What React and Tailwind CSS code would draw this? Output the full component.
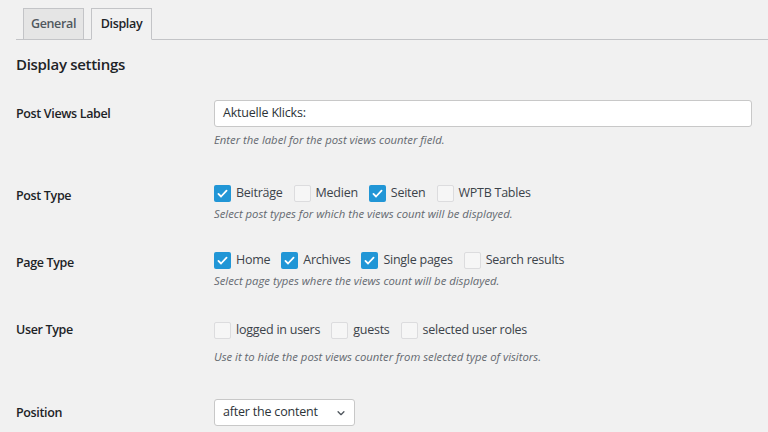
import React from 'react';

const Check = ({ checked, label }) => (
  <label className="flex items-center">
    {checked ? (
      <span className="flex h-[17px] w-[17px] items-center justify-center rounded-[2px] bg-[#2196d6]">
        <svg viewBox="0 0 16 16" className="h-[13px] w-[13px]" fill="none" stroke="#fff" strokeWidth="2.2" strokeLinecap="round" strokeLinejoin="round">
          <path d="M3 8.5l3.2 3.2L13 4.5" />
        </svg>
      </span>
    ) : (
      <span className="h-[17px] w-[17px] rounded-[2px] border border-[#dcdcde] bg-[#f6f6f6]" />
    )}
    <span className="ml-[5px] mr-[11px] text-[12.5px] leading-[18px] tracking-[-0.25px] text-[#3c434a]">{label}</span>
  </label>
);

const Desc = ({ children }) => (
  <p className="text-[11.3px] italic leading-[14px] text-[#646970]">{children}</p>
);

const Row = ({ label, labelPad, top, children }) => (
  <div className="flex" style={{ marginTop: top }}>
    <div className="w-[198px] shrink-0 text-[12.5px] font-semibold leading-[18px] tracking-[-0.35px] text-[#1d2327]" style={{ paddingTop: labelPad }}>
      {label}
    </div>
    <div className="flex-1">{children}</div>
  </div>
);

export default function App() {
  return (
    <div className="h-[432px] w-[768px] overflow-hidden bg-[#f1f1f1] font-['Open_Sans',sans-serif]">
      <div className="ml-4 flex gap-[7px] border-b border-[#c3c4c7] pl-[7px] pt-2">
        <div className="-mb-px flex h-[32px] w-[61px] items-center justify-center border border-[#c3c4c7] bg-[#e5e5e5] text-[12.5px] font-semibold tracking-[-0.35px] text-[#50575e]">
          General
        </div>
        <div className="-mb-px flex h-[32px] w-[61px] items-center justify-center border border-b-[#f1f1f1] border-[#c3c4c7] bg-[#f1f1f1] text-[12.5px] font-semibold tracking-[-0.35px] text-[#1d2327]">
          Display
        </div>
      </div>

      <div className="px-4">
        <h2 className="mt-[14px] text-[15px] font-semibold leading-[20px] tracking-[-0.3px] text-[#1d2327]">Display settings</h2>

        <Row label="Post Views Label" labelPad={5} top={26}>
          <div className="flex h-[27px] items-center rounded-[3px] border border-[#c8c8c8] bg-white px-2 text-[12.5px] tracking-[-0.2px] text-[#2c3338]">
            Aktuelle Klicks:
          </div>
          <div className="mt-[6px]">
            <Desc>Enter the label for the post views counter field.</Desc>
          </div>
        </Row>

        <Row label="Post Type" labelPad={3} top={37}>
          <div className="flex">
            <Check checked label="Beiträge" />
            <Check label="Medien" />
            <Check checked label="Seiten" />
            <Check label="WPTB Tables" />
          </div>
          <div className="mt-[5px]">
            <Desc>Select post types for which the views count will be displayed.</Desc>
          </div>
        </Row>

        <Row label="Page Type" labelPad={3} top={30}>
          <div className="flex">
            <Check checked label="Home" />
            <Check checked label="Archives" />
            <Check checked label="Single pages" />
            <Check label="Search results" />
          </div>
          <div className="mt-[5px]">
            <Desc>Select page types where the views count will be displayed.</Desc>
          </div>
        </Row>

        <Row label="User Type" labelPad={0} top={33}>
          <div className="flex">
            <Check label="logged in users" />
            <Check label="guests" />
            <Check label="selected user roles" />
          </div>
          <div className="mt-[11px]">
            <Desc>Use it to hide the post views counter from selected type of visitors.</Desc>
          </div>
        </Row>

        <Row label="Position" labelPad={5} top={35}>
          <div className="flex h-[27px] w-[141px] items-center justify-between rounded-[3px] border border-[#c8c8c8] bg-white pl-2 pr-[8px] text-[12.5px] tracking-[-0.2px] text-[#2c3338]">
            <span>after the content</span>
            <svg viewBox="0 0 12 12" className="h-[10px] w-[10px]" fill="none" stroke="#50575e" strokeWidth="1.6" strokeLinecap="round" strokeLinejoin="round">
              <path d="M2.5 4.5L6 8l3.5-3.5" />
            </svg>
          </div>
        </Row>
      </div>
    </div>
  );
}
